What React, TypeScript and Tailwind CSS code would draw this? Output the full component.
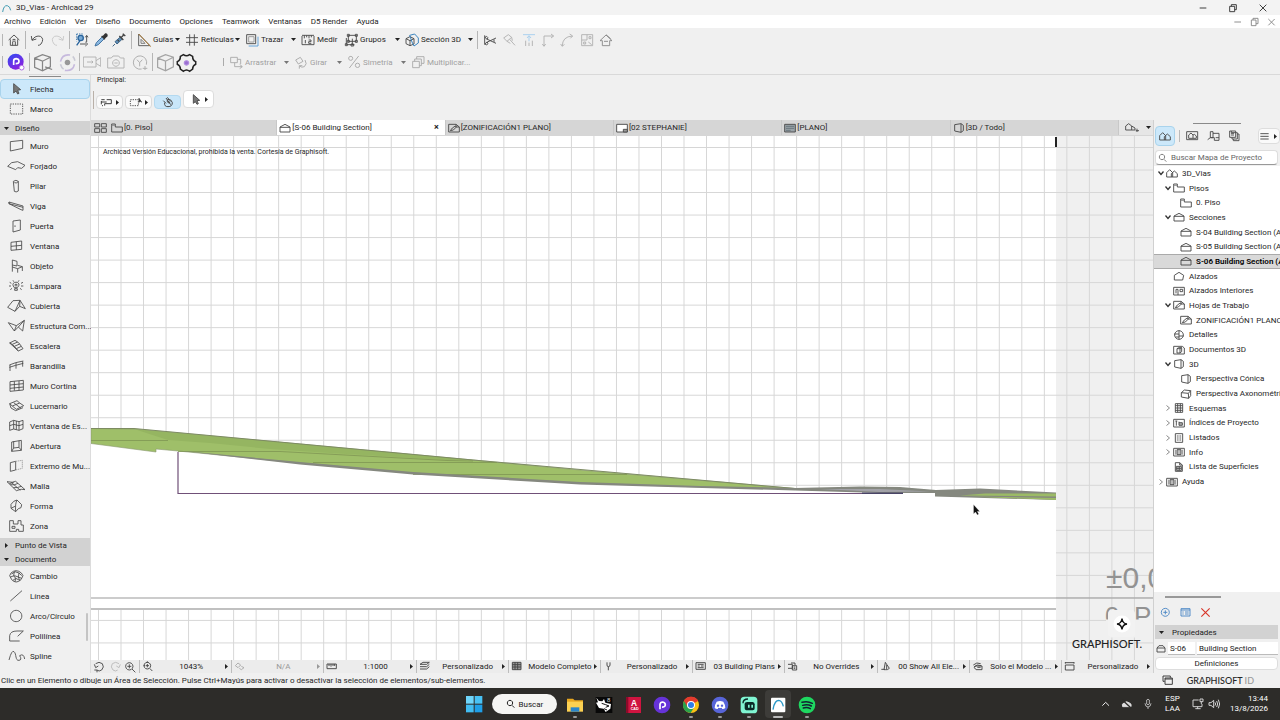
import React from "react";

type Shape = { d: string; fill?: string; stroke?: string; w?: number; dash?: string };
type Art = string | Shape[];

/* Icons are drawn on a grid of three units per pixel; big ones reuse the 48-unit grid at a larger size. */
function Icon({ art, w = 16, h = 16, color = "#4a4a4a", sw = 2.8, big }: { art: Art; w?: number; h?: number; color?: string; sw?: number; big?: boolean }) {
  const shapes: Shape[] = typeof art === "string" ? [{ d: art }] : art;
  return (
    <svg width={big ? 21 : w} height={big ? 21 : h} viewBox={big ? "0 0 48 48" : `0 0 ${w * 3} ${h * 3}`} className="shrink-0" fill="none" stroke={color} strokeWidth={sw} aria-hidden="true">
      {shapes.map((s, i) => (
        <path key={i} d={s.d} fill={s.fill ?? "none"} stroke={s.stroke ?? color} strokeWidth={s.w ?? sw} strokeDasharray={s.dash} />
      ))}
    </svg>
  );
}

function Tri({ dir = "down", color = "#222" }: { dir?: "down" | "right"; color?: string }) {
  return (
    <svg width="5" height="5" viewBox="0 0 10 10" className="shrink-0" aria-hidden="true">
      <path d={dir === "down" ? "M0 2H10L5 8Z" : "M2 0V10L8 5Z"} fill={color} />
    </svg>
  );
}

const house = "M8 24L24 9L40 24M13 22V40H35V22M20 40V29Q24 24 28 29V40M19 24Q24 19 29 24";

/* ---------- tool palette ---------- */
const tool: Record<string, Art> = {
  Flecha: [{ d: "M20 5V33L27 27L32 36L36 34L32 25L41 23Z", fill: "#777" }],
  Marco: [{ d: "M10 6H47V36H10Z", dash: "4 3" }],
  Muro: "M10 8L47 4V28L10 36Z",
  Forjado: "M2 22L14 11L32 8L54 19L44 28L32 26L26 32Z",
  Pilar: "M19 7Q27 1 34 7V36Q27 41 22 37ZM22 11Q28 14 34 8",
  Viga: "M6 9L48 21V34L42 32L6 14ZM6 9V14L48 25",
  Puerta: "M18 6L40 3V33L18 39ZM24 19V24",
  Ventana: "M12 10L44 6V31L12 34ZM28 8V33M12 22L44 19",
  Objeto: "M16 3L30 7V21L16 18ZM16 18V38M16 24L32 29L46 23L32 19M32 29V41M46 23V36",
  Lámpara: "M22 26Q13 15 23 10Q33 7 36 15Q37 20 31 26ZM23 29H31V34H23ZM25 22L24 16H30L29 22M8 10L13 13M6 21H12M10 32L15 28M48 10L42 13M49 21H42M44 32L39 28M18 4L20 8M36 4L34 8",
  Cubierta: "M2 25L18 5L39 4L55 29L38 22L24 37ZM39 4L24 37M39 4L38 22",
  "Estructura Com...": "M4 11L28 20L52 4L47 36L34 24L22 36ZM28 20L22 36M52 4L34 24",
  Escalera: "M8 12L24 4L32 9L16 16ZM16 16L22 22L38 15L32 9M22 22L28 29L43 22L38 15M28 29L34 36L48 29L43 22M8 12L34 36",
  Barandilla: "M7 18L26 11L49 6M7 25L26 19L49 13M9 18V36M27 11V29M47 7V23",
  "Muro Cortina": "M9 8L49 4V33L9 37ZM22 7V35M36 6V34M9 18L49 14M9 28L49 24",
  Lucernario: "M8 14L30 5L38 12L16 21ZM16 21L28 31L50 20L38 12M20 11L42 28M12 27L26 35L48 26M8 14L12 27",
  "Ventana de Es...": "M8 9L20 4L36 8L48 4V29L36 34L20 30L8 34ZM20 4V30M36 8V34M8 20L20 16L36 20L48 16M28 6V32",
  Abertura: "M14 9L43 4V34L14 37ZM20 7V27L36 25V5M20 27L14 37M36 25L43 34",
  "Extremo de Mu...": [{ d: "M10 11L26 7V33L10 37Z" }, { d: "M26 7L46 4V28L26 33", stroke: "#999", dash: "4 2" }],
  Malla: "M0 8Q18 12 26 7L54 32Q44 28 28 35ZM10 17Q22 20 33 13M19 26Q32 27 43 22M13 10L40 34M7 14L20 10",
  Forma: "M12 16Q20 4 30 3L44 17L42 26Q34 26 26 38L12 28ZM30 3Q24 14 26 38M12 28L24 22",
  Zona: "M8 5H19V15H33V5H42V18H49V37H35V31H28V37H8ZM15 22H24V28H15Z",
  Cambio: "M12 12Q27 -2 43 12L48 20L42 32Q27 46 14 32L8 20ZM14 15L24 8L36 12L44 20M10 24L22 20L34 24L44 28M18 34L26 28L38 34M22 8L20 20L26 28L24 38M36 12L34 24L38 34",
  Línea: "M10 36L45 5",
  "Arco/Círculo": "M28 4A17 17 0 1 1 27 4Z",
  Polilínea: "M8 36V20Q10 6 30 6H49L32 22M8 36H38",
  Spline: "M6 33Q14 2 21 8C29 14 24 36 36 34Q46 33 38 20Q50 12 53 30",
};
const design = ["Muro", "Forjado", "Pilar", "Viga", "Puerta", "Ventana", "Objeto", "Lámpara", "Cubierta", "Estructura Com...", "Escalera", "Barandilla", "Muro Cortina", "Lucernario", "Ventana de Es...", "Abertura", "Extremo de Mu...", "Malla", "Forma", "Zona"];
const docs = ["Cambio", "Línea", "Arco/Círculo", "Polilínea", "Spline"];

function ToolRow({ name, on }: { name: string; on?: boolean }) {
  return (
    <button className={"flex h-5 w-full shrink-0 items-center gap-1 whitespace-nowrap border pl-1.5 text-left " + (on ? "rounded-sm border-[#a9d3ec] bg-[#cce8fa]" : "border-transparent")}>
      <Icon art={tool[name]} w={19} h={14} sw={2.6} />
      <span>{name}</span>
    </button>
  );
}
function Head({ name, closed }: { name: string; closed?: boolean }) {
  return (
    <button className="flex h-3.5 w-full shrink-0 items-center gap-1.5 bg-[#d2d2d2] pl-1 text-left">
      <Tri dir={closed ? "right" : "down"} />
      <span>{name}</span>
    </button>
  );
}
function Palette() {
  return (
    <aside className="relative flex w-[91px] shrink-0 flex-col border-r border-[#dcdcdc] bg-[#f0f0f0]">
      <div className="mx-auto mb-0.5 mt-px h-px w-8 shrink-0 bg-[#8a8a8a]" />
      <ToolRow name="Flecha" on />
      <ToolRow name="Marco" />
      <div className="mb-px mt-0.5"><Head name="Diseño" /></div>
      {design.map((n) => <ToolRow key={n} name={n} />)}
      <div className="mt-0.5 flex flex-col">
        <Head name="Punto de Vista" closed />
        <Head name="Documento" />
      </div>
      {docs.map((n) => <ToolRow key={n} name={n} />)}
      <div className="absolute bottom-8 right-0.5 h-7 w-0.5 rounded bg-[#c4c4c4]" />
    </aside>
  );
}

/* ---------- toolbars ---------- */
const Sep = () => <div className="h-4.5 w-px shrink-0 bg-[#b5b5b5]" />;

function IconBtn({ art, label, color, cls, big, sw }: { art: Art; label: string; color?: string; cls: string; big?: boolean; sw?: number }) {
  return (
    <button aria-label={label} className={"flex shrink-0 items-center justify-center " + cls}>
      <Icon art={art} color={color} big={big} sw={sw} />
    </button>
  );
}
function LabelBtn({ art, label, arrow, cls, color }: { art: Art; label: string; arrow?: boolean; cls: string; color?: string }) {
  return (
    <button className={"flex shrink-0 items-center whitespace-nowrap " + cls}>
      <Icon art={art} color={color} />
      <span className="ml-px">{label}</span>
      {arrow && <span className="ml-auto mr-1"><Tri color={color ? "#777" : "#222"} /></span>}
    </button>
  );
}

const cubeArt = "M6 14L24 6L42 12V34L24 43L6 35ZM6 14L24 21L42 12M24 21V43";
const PaintP = () => (
  <svg width="18" height="18" viewBox="0 0 54 54" aria-hidden="true">
    <defs>
      <linearGradient id="pg" x1="0" y1="0" x2="0.6" y2="1"><stop offset="0" stopColor="#2f4cf2" /><stop offset="1" stopColor="#8a22e0" /></linearGradient>
    </defs>
    <circle cx="26" cy="26" r="24" fill="url(#pg)" />
    <path d="M20 36V24Q20 17 28 17Q36 18 36 25Q36 32 27 32H26" fill="none" stroke="#fff" strokeWidth="5" />
    <circle cx="44" cy="44" r="7" fill="#fff" stroke="#b06be8" strokeWidth="3" />
  </svg>
);

function Toolbars() {
  const g = "#b0b0b0";
  return (
    <div className="shrink-0 border-b border-[#d9d9d9] bg-[#f0f0f0] pb-px">
      <div className="flex h-[23px] items-center pl-0.5">
        <div className="h-3 w-px bg-[#b5b5b5]" />
        <IconBtn label="Inicio" cls="w-[22px]" art={house} />
        <Sep />
        <IconBtn label="Deshacer" cls="w-[21px]" art="M7 12L9 25L22 21M9 24Q20 9 34 13Q47 20 36 36Q32 40 27 40" />
        <IconBtn label="Rehacer" cls="w-[22px]" color="#c8c8c8" art="M41 12L39 25L26 21M39 24Q28 9 14 13Q1 20 12 36Q16 40 21 40" />
        <Sep />
        <div className="flex w-[61px] items-center justify-between px-1">
          <Icon art={[{ d: "M8 6H28M8 6V28", dash: "4 3", stroke: "#2d6fa8" }, { d: "M12 18A8 8 0 1 1 28 18A8 8 0 1 1 12 18M18 26L8 40", stroke: "#27639c", fill: "#78a9d4", w: 4 }, { d: "M38 12V30M34 16L38 10L42 16M18 36H36M34 30L41 36L34 42" }]} />
          <Icon art={[{ d: "M6 42L10 32L28 14L34 20L16 38Z", fill: "#8ab7df", stroke: "#3b6e9e" }, { d: "M26 12L36 22M30 14L37 6Q43 5 42 12L34 19Z", fill: "#333", stroke: "#333", w: 4 }]} />
          <Icon art={[{ d: "M5 43L12 36M12 29L28 15L34 21L18 36Z", fill: "#5f8fb8", stroke: "#3a5f80" }, { d: "M25 12L37 24M30 17L40 7M35 5L43 12M20 24L24 28", w: 4, stroke: "#444" }]} />
        </div>
        <Sep />
        <LabelBtn cls="w-[52px] pl-1" label="Guías" arrow art={[{ d: "M8 6V41H42Z", stroke: "#555" }, { d: "M15 22V34H27Z", stroke: "#777" }, { d: "M8 6L44 44", stroke: "#b07a2e" }]} />
        <LabelBtn cls="w-[60px]" label="Retículas" arrow art="M17 7V41M31 7V41M6 17H42M6 31H42" />
        <LabelBtn cls="w-14" label="Trazar" arrow art={[{ d: "M8 8H35V35H8Z" }, { d: "M14 14H30V30H14Z", stroke: "#999" }, { d: "M14 42H42V14", stroke: "#5e9fd8" }]} />
        <LabelBtn cls="w-[43px]" label="Medir" art="M6 12V38M42 12V38M6 10H42M6 38H42M13 10V19M20 10V16M27 10V19M34 10V16M16 24V34M26 24H33V29H26V34H34" />
        <LabelBtn cls="w-[61px]" label="Grupos" arrow art="M16 10H40V28H16ZM13 7H19V13H13ZM37 7H43V13H37ZM13 25H19V31H13ZM37 25H43V31H37ZM10 18V38H34M7 35H13V41H7ZM28 20V40M24 36H32V42H24Z" />
        <LabelBtn cls="w-[73px]" label="Sección 3D" arrow art={[{ d: "M6 20L18 14L30 20V36L18 41L6 35ZM6 20L18 26L30 20M18 26V41" }, { d: "M17 10L32 6L43 18V33L30 42L24 30Z", stroke: "#2f7dbb" }]} />
        <Sep />
        <div className="flex w-[136px] items-center justify-between pl-1">
          <Icon art="M8 10V38M12 20L42 34M12 32L42 18M12 20Q6 14 14 13Q20 16 16 22M12 32Q6 38 14 39Q20 36 16 30M36 22V30" />
          <Icon color={g} art="M8 18L22 8L32 16L18 28ZM26 22L42 40M18 28L28 34M32 16L34 26" />
          <Icon color={g} art={[{ d: "M6 8H42", stroke: "#a5cdee" }, { d: "M24 28V12M18 18L24 11L30 18", stroke: "#a5cdee" }, { d: "M14 26V42M34 26V42M24 32V42" }]} />
          <Icon color={g} art="M12 42V12H40M33 6L41 12L33 18M7 36L12 43L17 36" />
          <Icon color={g} art="M10 42Q10 14 40 12M32 6L41 12L34 19M5 36L10 43L16 37" />
          <Icon color={g} art="M8 8H41V41H8ZM8 24H24V8M30 14H36V20H30ZM14 30H20V36H14ZM28 30L38 38" />
          <Icon color="#8a8a8a" art="M6 26L24 9L42 26H35V41H13V26ZM18 28H30M24 8L38 20" />
        </div>
      </div>
      <div className="flex h-[22px] items-center pl-0.5">
        <div className="h-3 w-px bg-[#b5b5b5]" />
        <button aria-label="D5 Render" className="flex w-[26px] shrink-0 justify-center"><PaintP /></button>
        <Sep />
        <IconBtn big label="Modelo" cls="w-[25px]" color="#858585" art={[{ d: cubeArt }, { d: "M30 34L46 40", w: 3 }]} />
        <IconBtn big label="Sincronizar" cls="w-6" sw={3} art={[{ d: "M30 7Q12 4 8 22M18 42Q36 45 40 28", stroke: "#c6b9dd", w: 3.5 }, { d: "M8 28Q10 36 15 39M36 10Q40 14 41 20", stroke: "#c9c9d4", w: 3.5 }, { d: "M24 19A5 5 0 1 1 23.900 19Z", fill: "#999", stroke: "#999" }]} />
        <Sep />
        <div className="flex w-[72px] items-center justify-around">
          <Icon w={18} color={g} art="M1 9H39V39H1ZM39 20L53 11V37L39 28M12 24H30M26 20L30 24L26 28" />
          <Icon w={18} color={g} art="M2 12H13L18 6H35L40 12H51V42H2ZM27 17A10 10 0 1 1 26.900 17ZM22 27H32" />
          <Icon w={18} color={g} sw={3} art="M32 45A20 20 0 1 1 46 32M26 26V37M26 26L18 17M26 26L34 17M42 36V50M35 43H49" />
        </div>
        <Sep />
        <IconBtn big label="Exportar" cls="w-6" color="#a4a4a4" art={cubeArt} />
        <IconBtn big label="Ajustes" cls="w-[18px]" art={[{ d: "M17 6Q24 11 31 6L38 10Q38 19 45 22V28Q38 31 38 39L31 44Q24 38 17 44L10 39Q10 31 3 28V22Q10 19 10 10Z", stroke: "#222", w: 3.5 }, { d: "M24 20A5 5 0 1 1 23.900 20Z", fill: "#9a6fd0", stroke: "#b08ae0" }]} />
        <div className="w-7" />
        <div className="h-2 w-px bg-[#aaa]" />
        <div className="flex pl-1 text-[#a0a0a0]">
          <LabelBtn cls="w-[65px]" color="#aaa" label="Arrastrar" arrow art="M8 10H28V26H8ZM20 26V38H42M35 31L43 38L35 44M28 16H38V30" />
          <LabelBtn cls="w-[53px]" color="#aaa" label="Girar" arrow art="M8 18L22 10L30 22L16 30ZM36 18Q44 30 34 38Q26 42 20 36M19 44V35H28" />
          <LabelBtn cls="w-16" color="#aaa" label="Simetría" arrow art="M38 6L10 42M8 12A6 6 0 1 1 20 14A6 6 0 1 1 8 12M28 34A6 6 0 1 1 41 34A6 6 0 1 1 28 34" />
          <LabelBtn cls="" color="#aaa" label="Multiplicar..." art="M8 22H28V41H8ZM14 22V15H34V35H28M20 15V8H42V28H34" />
        </div>
      </div>
    </div>
  );
}

function InfoBox() {
  const b = "flex h-3.5 w-[27px] items-center justify-center gap-0.5 rounded-sm ";
  return (
    <div className="h-[45px] shrink-0 bg-[#f0f0f0] px-0.5 pt-px">
      <div className="pl-1 text-[7px] leading-[9px]">Principal:</div>
      <div className="mt-[5px] flex items-center gap-0.5">
        <div className="h-4.5 w-px bg-[#b9b0a8]" />
        <button aria-label="Selección" className={b + "mt-1 border border-[#dadada] bg-[#fafafa]"}><Icon w={13} h={11} art="M4 8H14M4 15H20M6 26H9M4 12V22M20 8H34V20H14V26" color="#333" /><Tri dir="right" /></button>
        <button aria-label="Área" className={b + "mt-1 border border-[#dadada] bg-[#fafafa]"}><Icon w={13} h={11} art={[{ d: "M4 8H28V26H4Z", dash: "4 3" }, { d: "M30 4V16L34 12L38 16Z", fill: "#222" }]} /><Tri dir="right" /></button>
        <button aria-label="Imán" className={b + "mt-1 border border-[#b3d9f0] bg-[#c9e6f9]"}><Icon w={12} h={12} sw={3} art="M8 20Q6 32 18 32Q31 32 31 20Q29 10 18 10Q12 15 18 20Q24 23 24 16M4 14L12 22M16 4L24 14M12 6L26 26" /></button>
        <button aria-label="Flecha" className="mb-0.5 flex h-[18px] w-[31px] items-center justify-center gap-0.5 rounded-sm border border-[#dcdcdc] bg-white"><Icon w={13} h={13} art={[{ d: "M13 5V31L19 26L24 34L28 32L24 23L32 22Z", fill: "#777" }]} /><Tri dir="right" /></button>
      </div>
    </div>
  );
}

/* ---------- tree icons, 12 x 10 px ---------- */
const T = {
  model: "M2 27V14L11 5L20 14M2 27H34V17L25 9L16 17V27M20 14V27",
  floor: [{ d: "M2 27V3H13V12H34V27Z" }, { d: "M2 7H13", stroke: "#888" }] as Shape[],
  section: "M3 27V12L18 4L33 12V27ZM3 13H33",
  elev: "M4 27V13L18 4L32 13L29 27Z",
  inner: "M2 4H34V27H2ZM9 10V22M15 10V27M9 10H15M21 10H29V17H21Z",
  sheet: "M2 27V4H24L34 12V27ZM24 4V12H34M7 23L13 15L22 9L25 12L16 21Z",
  detail: "M18 2A13 13 0 1 1 17.900 2ZM18 2V28M4 12H18M18 18H32M8 21H18",
  doc3: "M2 4H28L34 9V27H2ZM12 11L17 8H26V20L21 24H12ZM12 11H21V24M21 11L26 8",
  box: "M5 5L24 2L31 7V23L24 28L5 24ZM24 2V28",
  axo: "M4 11L13 3L32 5V20L26 28L4 24ZM4 11L25 13L32 5M25 13L26 28",
  gridi: "M7 2H29V28H7ZM14 2V28M22 2V28M7 8H29M7 15H29M7 22H29",
  index: "M2 4H34V27H2ZM7 9H13M10 9V23M18 11V22H28V14H18M18 18H28",
  list: [{ d: "M7 2H29V28H7Z" }, { d: "M13 6V24M18 6V24M23 6V24", stroke: "#999" }] as Shape[],
  info: [{ d: "M2 4H34V27H2Z" }, { d: "M12 8V23H24V8Z", fill: "#bbb" }, { d: "M8 8V23M28 8V23", stroke: "#888" }] as Shape[],
  surf: "M7 28V2H20L28 9V28ZM10 13H25V25H10ZM10 19H25M15 13V25M20 13V25M20 2V9H28",
};

const tabs: { t: string; i: Art; on?: boolean }[] = [
  { t: "[0. Piso]", i: T.floor },
  { t: "[S-06 Building Section]", i: T.section, on: true },
  { t: "[ZONIFICACIÓN1 PLANO]", i: T.sheet },
  { t: "[02 STEPHANIE]", i: [{ d: "M2 4H34V27H2Z", fill: "#fff" }, { d: "M22 19H34V27H22Z", fill: "#999" }] },
  { t: "[PLANO]", i: [{ d: "M2 4H34V27H2Z", fill: "#9aa3a8" }, { d: "M6 10H30M6 16H30M6 22H20", stroke: "#66747c" }] },
  { t: "[3D / Todo]", i: T.box },
];

function Tabs() {
  return (
    <div className="flex h-4 shrink-0 bg-[#d6d6d6] pb-px">
      <button aria-label="Todas las pestañas" className="flex w-[18px] items-center justify-center">
        <Icon w={13} h={12} art="M2 5H17V15H2ZM22 5H37V15H22ZM2 20H17V31H2ZM22 20H37V31H22Z" />
      </button>
      <nav className="flex min-w-0 flex-1">
        {tabs.map((t) => (
          <button key={t.t} className={"flex min-w-0 flex-1 items-center gap-px whitespace-nowrap border-r border-[#c8c8c8] pl-0.5 " + (t.on ? "bg-white" : "")}>
            <Icon art={t.i} w={12} h={10} />
            <span>{t.t}</span>
            {t.on && <span className="ml-auto mr-1.5 text-[9px] font-bold">×</span>}
          </button>
        ))}
      </nav>
      <button aria-label="Vista" className="flex w-[34px] items-center justify-between bg-[#e6e6e6] pl-1.5 pr-0.5">
        <Icon art="M2 24V12L11 5L20 12L30 18V24ZM20 12V24M32 26H42M36 20V30" w={14} h={11} />
        <Tri />
      </button>
    </div>
  );
}

function Canvas() {
  return (
    <main className="relative min-h-0 flex-1 overflow-hidden bg-white">
      <svg viewBox="91 136 1062 524" preserveAspectRatio="xMinYMin slice" className="block size-full" aria-label="Sección S-06">
        <defs>
          <pattern id="grid" x="98" y="147" width="22.520" height="22.520" patternUnits="userSpaceOnUse">
            <path d="M0.500 0V22.520M0 0.500H22.520" stroke="#d6d6d6" strokeWidth="1" fill="none" />
          </pattern>
        </defs>
        <rect x="1056" y="136" width="900" height="900" fill="#f0f0f0" />
        <rect x="91" y="136" width="1900" height="900" fill="url(#grid)" />
        <path d="M91 443L134 430L795 488L1056 494V609H91Z" fill="#fff" />
        <path d="M91 428.500L134 429L300 444L473 460L580 470L795 488.500L700 487L580 483L413 473L300 463L178 451L156 449V452L91 443.500Z" fill="#9fbf69" stroke="#8a9770" strokeWidth="0.600" />
        <path d="M134 429L300 444L473 460L447 460L330 453L270 449L210 443L168 440Z" fill="#95b561" />
        <path d="M91 428.500H134L473 460L795 488.500" fill="none" stroke="#7d8b62" strokeWidth="1" />
        <path d="M91 440.500H168M178 451.500H280L447 460.500L473 461M313 462.500H497M413 474.500H627" fill="none" stroke="#7f9653" strokeWidth="0.800" />
        <path d="M178 450.500L300 462L413 472L580 482L700 486L795 488L860 486.500L900 487L936 490L980 488.500L1056 492.500V494L980 494L935 493H880L795 490.500L580 484.500L413 474.500L300 464.500Z" fill="#85887f" />
        <path d="M820 489L880 489L930 491.500L880 492Z" fill="#a2a2a8" />
        <path d="M935 491L1056 494V500L935 496.500Z" fill="#85887f" />
        <path d="M985 493.500L1056 493.500V496.500L960 495.500ZM970 496.500L1056 498V500Z" fill="#9cbb66" />
        <path d="M178 452V493.500H903" fill="none" stroke="#705078" strokeWidth="1.200" />
        <path d="M862 492.500H903V494H862Z" fill="#494467" />
        <path d="M91 598H1990" stroke="#999" strokeWidth="1.200" />
        <path d="M91 609H1056" stroke="#c0c0c0" strokeWidth="2" />
        <path d="M1056 137V147" stroke="#222" strokeWidth="2" />
        <g fill="#929292" fontFamily="'Liberation Sans', sans-serif" fontSize="30">
          <text x="1106" y="588">±0,0</text>
          <text x="1105" y="625" fontSize="26">0. P</text>
        </g>
        <rect x="1106" y="619.500" width="47" height="18" fill="#f0f0f0" />
        <rect x="1108" y="610" width="27" height="27" rx="4" fill="#f2f2f2" />
        <circle cx="1122" cy="624" r="8.500" fill="#fff" />
        <path d="M1122 618.500Q1122.500 623.500 1127 624Q1122.500 624.500 1122 629.500Q1121.500 624.500 1117 624Q1121.500 623.500 1122 618.500Z" fill="#fff" stroke="#111" strokeWidth="1.400" />
        <text x="1072" y="648" fontFamily="Lato, sans-serif" fontSize="11" fontWeight="500" fill="#222">GRAPHISOFT.</text>
        <path d="M973.500 504.500V514L975.500 512L977.300 515L978.800 514L977.300 511.500H979.800Z" fill="#111" stroke="#fff" strokeWidth="0.300" />
      </svg>
      <p className="absolute left-3 top-3 text-[7px] leading-[9px]">Archicad Versión Educacional, prohibida la venta. Cortesía de Graphisoft.</p>
    </main>
  );
}

const quick: { t: string; i: Art; off?: boolean }[] = [
  { t: "1043%", i: "M16 4A10 10 0 1 1 15.900 4ZM23 22L31 30M11 14H21M16 9V19M16 1V6M5 14H9" },
  { t: "N/A", i: "M4 14L12 6L20 12L12 20ZM22 16L30 20L22 26L16 22", off: true },
  { t: "1:1000", i: "M3 9H31V23H3ZM9 9V15M15 9V17M21 9V15M26 9V15" },
  { t: "Personalizado", i: "M3 10L12 4H31L23 10ZM3 17H23L31 10M3 24H23L31 17" },
  { t: "Modelo Completo", i: [{ d: "M4 4H30V26H4Z", fill: "#999" }, { d: "M4 11H30M4 18H30M12 4V26M20 4V26" }] },
  { t: "Personalizado", i: "M12 4V12Q12 17 16 17Q21 17 21 12V4M16 17V28" },
  { t: "03 Building Plans", i: "M3 5H31V25H3ZM8 10H26M8 20H26M8 15H14M18 15H26" },
  { t: "No Overrides", i: "M3 10H16V22H3M12 6H24V12M16 14H29V27H16ZM20 18H25M20 22H25" },
  { t: "00 Show All Ele...", i: "M12 26L16 4L28 22Q22 28 16 26ZM4 25H14M20 12V24" },
  { t: "Solo el Modelo ...", i: "M4 12Q14 2 26 8M6 18Q14 8 28 14M10 24Q4 20 10 15H30V26H12ZM16 19H26" },
  { t: "Personalizado", i: "M4 12H30V27H4ZM4 3V8M30 3V8M4 5H30" },
];
function QuickBar() {
  return (
    <div className="flex h-[13px] shrink-0 bg-[#ececec] text-[#222]">
      <div className="flex w-12 items-center justify-between px-0.5">
        <Icon w={13} h={12} art="M8 8Q18 0 28 8Q35 18 26 27Q18 33 12 27M4 10L8 20L16 15M4 27H12V34" />
        <Icon w={13} h={12} color="#bbb" art="M30 8Q20 0 10 8Q3 18 12 27Q20 33 26 27M34 10L30 20L22 15" />
        <Icon w={13} h={12} art="M16 5A11 11 0 1 1 15.900 5ZM24 24L34 34M10 16H22M16 10V22" />
      </div>
      {quick.map((q, i) => (
        <button key={i} className={"flex min-w-0 flex-1 items-center whitespace-nowrap border-l border-[#bdbdbd] px-0.5 " + (q.off ? "text-[#999]" : "")}>
          <Icon w={12} h={11} art={q.i} color={q.off ? "#aaa" : "#444"} />
          <span className="flex-1 pl-1 text-center">{q.t}</span>
          <Tri dir="right" color={q.off ? "#999" : "#222"} />
        </button>
      ))}
    </div>
  );
}

/* ---------- navigator ---------- */
const tree: { t: string; l: number; i: Art; c?: "o" | "c"; on?: boolean }[] = [
  { t: "3D_Vias", l: 0, i: T.model, c: "o" },
  { t: "Pisos", l: 1, i: T.floor, c: "o" },
  { t: "0. Piso", l: 2, i: T.floor },
  { t: "Secciones", l: 1, i: T.section, c: "o" },
  { t: "S-04 Building Section (Auto)", l: 2, i: T.section },
  { t: "S-05 Building Section (Auto)", l: 2, i: T.section },
  { t: "S-06 Building Section (Auto)", l: 2, i: T.section, on: true },
  { t: "Alzados", l: 1, i: T.elev },
  { t: "Alzados Interiores", l: 1, i: T.inner },
  { t: "Hojas de Trabajo", l: 1, i: T.sheet, c: "o" },
  { t: "ZONIFICACIÓN1 PLANO (I)", l: 2, i: T.sheet },
  { t: "Detalles", l: 1, i: T.detail },
  { t: "Documentos 3D", l: 1, i: T.doc3 },
  { t: "3D", l: 1, i: T.box, c: "o" },
  { t: "Perspectiva Cónica", l: 2, i: T.box },
  { t: "Perspectiva Axonométrica", l: 2, i: T.axo },
  { t: "Esquemas", l: 1, i: T.gridi, c: "c" },
  { t: "Índices de Proyecto", l: 1, i: T.index, c: "c" },
  { t: "Listados", l: 1, i: T.list, c: "c" },
  { t: "Info", l: 1, i: T.info, c: "c" },
  { t: "Lista de Superficies", l: 1, i: T.surf },
  { t: "Ayuda", l: 0, i: T.info, c: "c" },
];
const pad = ["pl-1", "pl-[11px]", "pl-[18px]"];

function Navigator() {
  return (
    <aside className="flex w-[127px] shrink-0 flex-col overflow-hidden border-l border-[#d0d0d0] bg-[#f0f0f0]">
      <div className="mx-auto mt-[3px] h-px w-12 shrink-0 bg-[#8a8a8a]" />
      <div className="mt-0.5 flex h-5 shrink-0 items-center">
        <button aria-label="Mapa de Proyecto" className="ml-px flex h-5 w-5 items-center justify-center rounded-sm border border-[#a9d3ec] bg-[#cce8fa]"><Icon art={T.model} w={12} h={10} /></button>
        <div className="mx-1 h-3 w-px bg-[#bbb]" />
        <div className="ml-0.5 flex gap-2">
          <Icon w={13} h={12} art="M2 5H35V29H2ZM8 25V15L15 9L21 15V25M21 15L25 13L31 18V25M8 25H31" />
          <Icon w={13} h={12} art="M10 5H18V23H10ZM2 29L10 23H22V31H36V10H18M26 23H36" />
          <Icon w={13} h={12} art="M5 3H23V22H5ZM10 3V8H28V27H12V22M16 27V32H33V12H28M9 10H18M9 15H18" />
        </div>
        <button aria-label="Opciones" className="ml-auto flex h-4 w-[22px] items-center justify-center gap-1 rounded-sm border border-[#ddd] bg-[#fafafa]"><Icon w={9} h={9} art="M1 5H26M1 13H26M1 21H26" /><Tri dir="right" /></button>
      </div>
      <label className="mb-px ml-px mr-0.5 mt-1 flex h-[15px] shrink-0 items-center gap-1 rounded-sm border border-[#ddd] border-b-[#999] bg-white pl-0.5">
        <Icon w={9} h={10} art="M12 4A8 8 0 1 1 11.900 4ZM18 19L25 26" color="#777" />
        <input aria-label="Buscar Mapa de Proyecto" placeholder="Buscar Mapa de Proyecto" className="min-w-0 flex-1 bg-transparent outline-none placeholder:text-[#666]" />
      </label>
      <div className="min-h-0 flex-1 overflow-hidden bg-white">
        <ul className="grid h-[323px] auto-rows-fr">
          {tree.map((n) => (
            <li key={n.t} className={"flex min-h-0 items-center whitespace-nowrap " + pad[n.l] + (n.on ? " border-y border-[#aaa] bg-[#d9d9d9] font-semibold text-black" : "")}>
              <span className="flex w-2 shrink-0">
                {n.c && (
                  <svg width="6" height="6" viewBox="0 0 12 12" fill="none" stroke={n.c === "o" ? "#333" : "#888"} strokeWidth={n.c === "o" ? 2.6 : 2} aria-hidden="true">
                    <path d={n.c === "o" ? "M1 3L6 9L11 3" : "M3 1L9 6L3 11"} />
                  </svg>
                )}
              </span>
              <Icon art={n.i} w={12} h={10} />
              <span className="ml-1">{n.t}</span>
            </li>
          ))}
        </ul>
      </div>
      <div className="h-[81px] shrink-0 text-[#222]">
        <div className="ml-[11px] mt-1 h-0.5 w-14 bg-[#999]" />
        <div className="flex h-[27px] items-center gap-[9px] pl-1.5 pt-px">
          <Icon w={11} h={11} color="#4a86c5" art="M16 4A12 12 0 1 1 15.900 4ZM10 16H22M16 10V22" />
          <Icon w={11} h={11} color="#4a86c5" art="M3 5H30V27H3ZM3 9H30M7 15H11M15 15H26M7 21H11M15 21H26" />
          <Icon w={11} h={11} color="#d8362a" sw={3.5} art="M4 4L29 29M29 4L4 29" />
        </div>
        <button className="ml-px flex h-3.5 w-[123px] items-center gap-2 bg-[#d2d2d2] pl-1"><Tri />Propiedades</button>
        <div className="mt-[3px] flex h-[13px] items-center gap-0.5 pl-0.5 pr-0.5">
          <Icon art="M3 12H27V24H3ZM3 12L9 5H21L27 12" w={10} h={10} />
          <input aria-label="ID" defaultValue="S-06" className="h-[13px] w-[27px] border-b border-[#bbb] bg-white pl-0.5" />
          <input aria-label="Nombre" defaultValue="Building Section" className="h-[13px] min-w-0 flex-1 border-b border-[#bbb] bg-white pl-0.5" />
        </div>
        <button className="ml-px mt-0.5 flex h-[13px] w-[123px] items-center justify-center rounded-sm border border-[#ddd] bg-white">Definiciones</button>
      </div>
    </aside>
  );
}

/* ---------- taskbar ---------- */
function AppIcon({ children, mark = true, on }: { children: React.ReactNode; mark?: boolean; on?: boolean }) {
  return (
    <button className={"flex h-7 w-[26px] flex-col items-center justify-end gap-0.5 rounded-sm " + (on ? "bg-[#3d3c39]" : "")}>
      <svg width="18" height="18" viewBox="0 0 54 54" aria-hidden="true">{children}</svg>
      <span className={"h-0.5 rounded " + (on ? "w-2.5 bg-[#bbb]" : mark ? "w-1 bg-[#999]" : "w-1")} />
    </button>
  );
}

function Taskbar() {
  return (
    <footer className="relative flex h-8 shrink-0 items-center justify-center bg-[#2d2c29] pl-1 text-white">
      <div className="flex items-center">
        <button aria-label="Inicio de Windows" className="mr-[9px]">
          <svg width="18" height="18" viewBox="0 0 54 54" aria-hidden="true">
            <path d="M3 3H26V26H3Z" fill="#6fd6fb" /><path d="M29 3H52V26H29Z" fill="#48c2f5" /><path d="M3 29H26V52H3Z" fill="#42bdf2" /><path d="M29 29H52V52H29Z" fill="#1e9fe8" />
          </svg>
        </button>
        <button className="mr-[5px] flex h-5 w-[65px] items-center gap-1 rounded-full bg-[#f5f5f3] pl-3.5 text-[8px] text-[#222]">
          <Icon w={9} h={10} sw={3} color="#222" art="M12 4A8 8 0 1 1 11.900 4ZM18 19L25 26" />Buscar
        </button>
        <div className="flex gap-[3px]">
          <AppIcon><path d="M3 8H21L26 13H51V45H3Z" fill="#e9a820" /><path d="M3 17H51V47H3Z" fill="#fcd152" /><path d="M14 34H40V47H14Z" fill="#2a86cc" /></AppIcon>
          <AppIcon mark={false}><path d="M2 3H52V51H2Z" fill="#080808" /><path d="M4 5L12 15L22 16L27 9L31 20L48 24L46 38L32 48L26 38L12 36L3 20L9 19Z" fill="#fff" /><path d="M20 22L32 26L42 30L32 34M27 38L36 42" stroke="#111" strokeWidth="3" fill="none" /><text x="36" y="19" fontSize="18" fill="#ddd" fontFamily="Liberation Sans, sans-serif">8</text></AppIcon>
          <AppIcon mark={false}><path d="M6 3H51V51H6Z" fill="#cf1440" /><path d="M6 3H13V51H6Z" fill="#8c0b2a" /><text x="21" y="29" fontSize="25" fontWeight="700" fill="#fff" fontFamily="Liberation Sans, sans-serif">A</text><text x="20" y="43" fontSize="11" fontWeight="700" fill="#fff" fontFamily="Liberation Sans, sans-serif">CAD</text></AppIcon>
          <AppIcon mark={false}><circle cx="27" cy="27" r="25" fill="#6633d8" /><path d="M21 40V25Q22 18 29 18Q37 19 37 27Q36 34 27 33" fill="none" stroke="#fff" strokeWidth="5" /></AppIcon>
          <AppIcon><circle cx="27" cy="27" r="24" fill="#fbc116" /><path d="M27 27L6 15A24 24 0 0 1 48 15Z" fill="#e33b2e" /><path d="M27 27L6 15A24 24 0 0 0 26 51L37 33Z" fill="#2ba24c" /><path d="M27 15H48A24 24 0 0 0 6 15L17 33Z" fill="#e33b2e" /><circle cx="27" cy="27" r="12" fill="#fff" /><circle cx="27" cy="27" r="9" fill="#2f7de9" /></AppIcon>
          <AppIcon><circle cx="27" cy="27" r="25" fill="#5865d8" /><path d="M17 17Q27 13 37 17Q43 26 43 36Q38 40 34 39L32 35Q27 37 22 35L20 39Q16 40 11 36Q11 26 17 17Z" fill="#fff" /><circle cx="21" cy="29" r="3.500" fill="#5865d8" /><circle cx="33" cy="29" r="3.500" fill="#5865d8" /></AppIcon>
          <AppIcon><rect x="2" y="2" width="50" height="50" rx="11" fill="#80f5d2" /><path d="M14 25Q14 18 22 18H38Q44 19 44 25V37Q44 43 38 43H22Q14 43 14 36Z" fill="#0a2a27" /><path d="M9 22Q9 9 24 9" fill="none" stroke="#0a2a27" strokeWidth="4" /><path d="M24 26H29V35H24ZM34 26H39V35H34Z" fill="#80f5d2" /></AppIcon>
          <AppIcon on><rect x="6" y="5" width="43" height="44" rx="3" fill="#fff" /><path d="M12 41Q17 10 32 14Q39 16 43 31" fill="none" stroke="#2998c7" strokeWidth="4" /></AppIcon>
          <AppIcon><circle cx="27" cy="27" r="25" fill="#1ed760" /><path d="M12 19Q28 14 43 22M14 28Q28 23 40 30M16 36Q27 32 37 38" fill="none" stroke="#123" strokeWidth="4.500" strokeLinecap="round" /></AppIcon>
        </div>
      </div>
      <div className="absolute inset-y-0 right-3 flex items-center text-[8px] leading-[10px]">
        <div className="mr-3 flex items-center gap-2.5">
          <Icon w={10} h={10} color="#eee" sw={3} art="M4 20L14 10L24 20" />
          <Icon w={12} h={10} color="#ddd" art={[{ d: "M5 23Q1 15 9 12Q16 5 24 11Q33 14 30 23Z", fill: "#ddd" }, { d: "M5 4L31 28", stroke: "#2d2c29", w: 4 }]} />
          <Icon w={10} h={12} color="#ccc" sw={2.5} art="M11 6Q15 1 19 6V18Q15 23 11 18ZM6 16Q7 27 15 27Q23 27 24 16M15 27V33" />
        </div>
        <div className="mr-3 text-center">ESP<br />LAA</div>
        <div className="mr-2.5 flex gap-1">
          <Icon w={12} h={12} color="#ddd" art="M20 6H3V26H30V18M10 32H26M17 26V32M24 3H33V11H24ZM28 11V18" />
          <Icon w={12} h={12} color="#ddd" art="M3 14H9L17 7V29L9 22H3ZM21 13Q25 18 21 23M26 9Q32 18 26 27M31 5Q39 18 31 31" />
        </div>
        <div className="text-right">13:44<br />13/8/2026</div>
      </div>
    </footer>
  );
}

const menus = ["Archivo", "Edición", "Ver", "Diseño", "Documento", "Opciones", "Teamwork", "Ventanas", "D5 Render", "Ayuda"];

export default function App() {
  return (
    <div className="flex h-screen flex-col overflow-hidden bg-[#f0f0f0] font-['Roboto','Noto_Sans',sans-serif] text-[8px] leading-[11px] text-[#262626]">
      <header className="flex h-[15px] shrink-0 items-center bg-[#f3f3f3] pl-0.5">
        <Icon w={10} h={10} color="#3595ad" art="M2 27Q5 6 16 8Q24 10 26 22" />
        <h1 className="ml-1">3D_Vias - Archicad 29</h1>
        <div className="ml-auto flex gap-5 pr-3">
          <button aria-label="Minimizar"><Icon w={10} h={10} color="#333" art="M5 15H25" /></button>
          <button aria-label="Restaurar"><Icon w={10} h={10} color="#333" art="M5 10H20V26H5ZM10 10V5H25V20H20" /></button>
          <button aria-label="Cerrar"><Icon w={10} h={10} color="#333" art="M5 5L25 25M25 5L5 25" /></button>
        </div>
      </header>
      <nav className="flex h-[13px] shrink-0 items-center bg-white pl-1">
        <div className="flex gap-[9px]">
          {menus.map((m) => <button key={m}>{m}</button>)}
        </div>
        <div className="ml-auto flex gap-2 pr-1">
          <Icon w={9} h={10} color="#888" art="M4 15H24" />
          <Icon w={9} h={10} color="#888" art="M4 9H18V26H4ZM9 9V4H24V20H18" />
          <Icon w={9} h={10} color="#888" art="M4 6L23 25M23 6L4 25" />
        </div>
      </nav>
      <Toolbars />
      <div className="flex min-h-0 flex-1">
        <Palette />
        <div className="flex min-w-0 flex-1 flex-col">
          <InfoBox />
          <div className="flex min-h-0 flex-1">
            <div className="flex min-w-0 flex-1 flex-col">
              <Tabs />
              <Canvas />
              <QuickBar />
            </div>
            <Navigator />
          </div>
        </div>
      </div>
      <div className="flex h-[15px] shrink-0 items-center bg-[#f0f0f0] pl-px">
        <p>Clic en un Elemento o dibuje un Área de Selección. Pulse Ctrl+Mayús para activar o desactivar la selección de elementos/sub-elementos.</p>
        <div className="ml-auto flex items-center gap-3.5 pr-[26px]">
          <Icon w={11} h={11} color="#333" art="M3 3H25V8M3 3V19H8M9 9H31V28H9ZM9 12H31" />
          <span className="font-['Lato',sans-serif] text-[9px] font-medium">GRAPHISOFT <span className="text-[#999]">ID</span></span>
        </div>
      </div>
      <Taskbar />
    </div>
  );
}
